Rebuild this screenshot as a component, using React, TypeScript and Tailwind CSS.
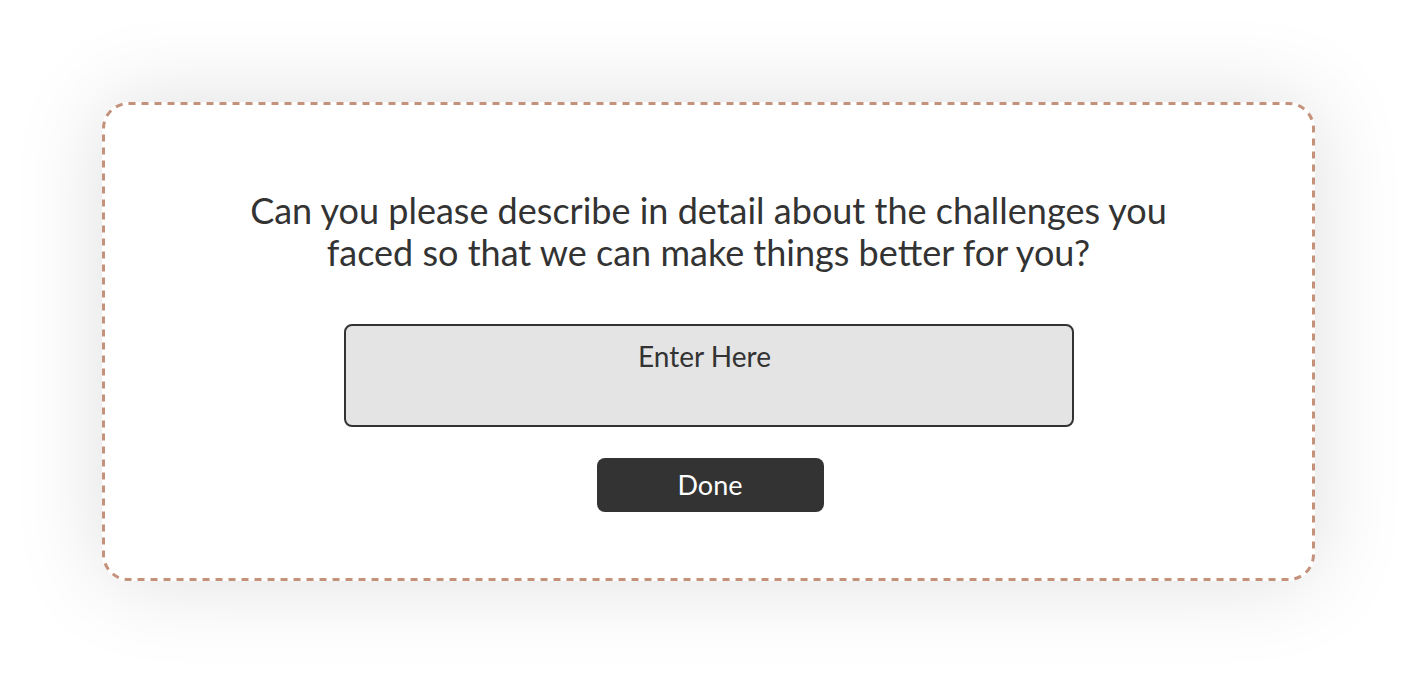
export default function App() {
  return (
    <div className="w-[1418px] h-[684px] bg-white flex items-start pt-[102px] pl-[102px]" style={{ fontFamily: "Lato, 'Open Sans', sans-serif" }}>
      <div className="relative w-[1213px] h-[479px] rounded-[26px] bg-white shadow-[0_0_90px_rgba(0,0,0,0.13)] flex flex-col items-center pt-[87px]">
        <svg className="absolute inset-0 pointer-events-none" width="1213" height="479">
          <rect x="1.5" y="1.5" width="1210" height="476" rx="25" ry="25" fill="none" stroke="#c4917a" strokeWidth="3" strokeDasharray="7 6" />
        </svg>
        <h1 className="text-[36px] leading-[42px] text-[#333333] text-center w-[960px]">
          Can you please describe in detail about the challenges you faced so that we can make things better for you?
        </h1>
        <div className="mt-[51px] w-[730px] h-[103px] rounded-[8px] border-2 border-[#333333] bg-[#e4e4e4] flex justify-center pt-[13px]">
          <span className="text-[28px] leading-[34px] text-[#333333] -ml-[8px]">Enter Here</span>
        </div>
        <button className="mt-[31px] ml-[3px] w-[227px] h-[54px] rounded-[8px] bg-[#333333] text-white text-[27px] leading-[34px]">
          Done
        </button>
      </div>
    </div>
  );
}
